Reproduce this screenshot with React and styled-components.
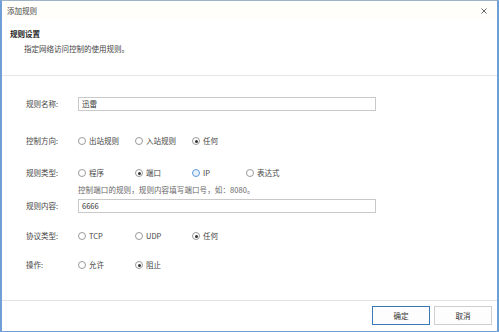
import React from "react";
import styled, { createGlobalStyle } from "styled-components";

const Global = createGlobalStyle`
  html, body { margin: 0; padding: 0; background: #ffffff; }
  body { font-family: "Noto Sans CJK SC", "Noto Sans", sans-serif; }
  * { box-sizing: border-box; }
`;

const Window = styled.div`
  width: 499px;
  height: 332px;
  display: flex;
  flex-direction: column;
  background: #ffffff;
  border-top: 1px solid #9fb3c8;
  border-left: 2px solid #6f9fd6;
  border-right: 2px solid #6f9fd6;
  border-bottom: 1px solid #6f9fd6;
  color: #333;
  font-size: 7.5px;
  line-height: 1;
`;

const TitleBar = styled.div`
  height: 19px;
  display: flex;
  align-items: center;
  justify-content: space-between;
  padding: 0 10px 0 5px;
  background: #fffefb;
  color: #444;
  font-size: 7.5px;
`;

const Close = styled.span`
  width: 6px;
  height: 6px;
  display: flex;
`;

const Header = styled.div`
  height: 56px;
  padding: 10px 0 0 8px;
  display: flex;
  flex-direction: column;
  border-bottom: 1px solid #e6e6e6;
`;

const Heading = styled.div`
  font-weight: bold;
  color: #222;
  font-size: 7.5px;
  height: 8px;
`;

const Sub = styled.div`
  margin-top: 7px;
  padding-left: 14px;
  color: #444;
  height: 8px;
`;

const Form = styled.div`
  flex: 1;
  display: flex;
  flex-direction: column;
  padding-left: 24px;
`;

const Row = styled.div`
  display: flex;
  align-items: center;
  height: ${(p) => p.$h || 16}px;
  margin-top: ${(p) => p.$top}px;
`;

const Label = styled.div`
  width: 52px;
  flex-shrink: 0;
  color: #444;
`;

const Input = styled.div`
  width: 298px;
  height: 14px;
  border: 1px solid #c9c9c9;
  display: flex;
  align-items: center;
  padding-left: 3px;
  color: #333;
`;

const Hint = styled.div`
  margin-left: 52px;
  color: #666;
  letter-spacing: 0.1px;
`;

const Options = styled.div`
  display: flex;
`;

const Option = styled.div`
  width: ${(p) => p.$w || 57}px;
  display: flex;
  align-items: center;
  gap: 3px;
  color: #444;
`;

const Circle = styled.span`
  width: 8px;
  height: 8px;
  border-radius: 50%;
  border: 1px solid ${(p) => (p.$focus ? "#5a9ad8" : "#9a9a9a")};
  background: ${(p) => (p.$focus ? "#e8f1fb" : "#fff")};
  display: flex;
  align-items: center;
  justify-content: center;
  &::after {
    content: "";
    width: 3px;
    height: 3px;
    border-radius: 50%;
    background: ${(p) => (p.$checked ? "#333" : "transparent")};
  }
`;

const Footer = styled.div`
  height: 31px;
  border-top: 1px solid #e3e3e3;
  display: flex;
  justify-content: flex-end;
  align-items: flex-start;
  padding: 5px 5px 0 0;
  gap: 4px;
`;

const Button = styled.div`
  width: 58px;
  height: 19px;
  display: flex;
  align-items: center;
  justify-content: center;
  background: #fdfdfd;
  border: 1px solid ${(p) => (p.$primary ? "#3a78b5" : "#cfcfcf")};
  color: #333;
`;

const Radio = ({ label, checked, focus, w }) => (
  <Option $w={w}>
    <Circle $checked={checked} $focus={focus} />
    <span>{label}</span>
  </Option>
);

export default function App() {
  return (
    <>
      <Global />
      <Window>
        <TitleBar>
          <span>添加规则</span>
          <Close>
            <svg width="6" height="6" viewBox="0 0 6 6">
              <path d="M0.5 0.5L5.5 5.5M5.5 0.5L0.5 5.5" stroke="#555" strokeWidth="0.9" />
            </svg>
          </Close>
        </TitleBar>
        <Header>
          <Heading>规则设置</Heading>
          <Sub>指定网络访问控制的使用规则。</Sub>
        </Header>
        <Form>
          <Row $top={20}>
            <Label>规则名称:</Label>
            <Input>迅雷</Input>
          </Row>
          <Row $top={21}>
            <Label>控制方向:</Label>
            <Options>
              <Radio label="出站规则" />
              <Radio label="入站规则" />
              <Radio label="任何" checked />
            </Options>
          </Row>
          <Row $top={16}>
            <Label>规则类型:</Label>
            <Options>
              <Radio label="程序" />
              <Radio label="端口" checked />
              <Radio label="IP" focus w={54} />
              <Radio label="表达式" />
            </Options>
          </Row>
          <Row $top={3} $h={12}>
            <Hint>控制端口的规则，规则内容填写端口号，如：8080。</Hint>
          </Row>
          <Row $top={2}>
            <Label>规则内容:</Label>
            <Input>6666</Input>
          </Row>
          <Row $top={14}>
            <Label>协议类型:</Label>
            <Options>
              <Radio label="TCP" />
              <Radio label="UDP" />
              <Radio label="任何" checked />
            </Options>
          </Row>
          <Row $top={13}>
            <Label>操作:</Label>
            <Options>
              <Radio label="允许" />
              <Radio label="阻止" checked />
            </Options>
          </Row>
        </Form>
        <Footer>
          <Button $primary>确定</Button>
          <Button>取消</Button>
        </Footer>
      </Window>
    </>
  );
}
